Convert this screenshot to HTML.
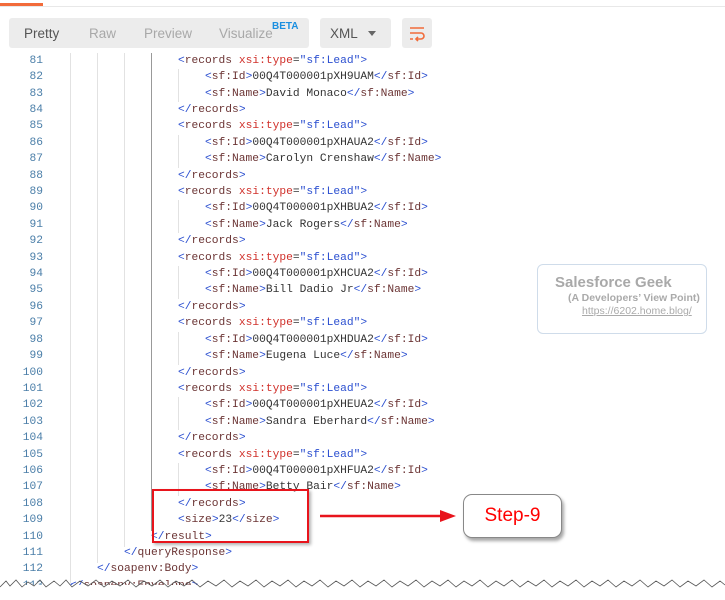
<!DOCTYPE html>
<html><head><meta charset="utf-8"><style>
body{margin:0;width:725px;height:600px;overflow:hidden;background:#fff;font-family:"Liberation Sans",sans-serif;position:relative}
.a{position:absolute}
pre{margin:0;font-family:"Liberation Mono",monospace;font-size:11.25px;line-height:16.4px;color:#333}
.n{position:absolute;left:0;width:43px;text-align:right;font-family:"Liberation Mono",monospace;font-size:11.25px;line-height:16.4px;color:#4a7ea8}
.b{color:#2b4fd0}.t{color:#6b3434}.r{color:#d0302a}.s{color:#2b4fd0}
.g{position:absolute;width:1px;background:#e2e2e2}
</style></head><body>
<div class="a" style="left:0;top:6px;width:725px;height:1px;background:#e8e8e8"></div>
<div class="a" style="left:0;top:3px;width:43px;height:3px;background:#f26b3a"></div>
<div class="a" style="left:9px;top:18px;width:300px;height:30px;background:#ececec;border-radius:3px"></div>
<div class="a" style="left:24px;top:26px;font-size:13.5px;color:#555">Pretty</div>
<div class="a" style="left:89px;top:26px;font-size:13.5px;color:#a8a8a8">Raw</div>
<div class="a" style="left:144px;top:26px;font-size:13.5px;color:#a8a8a8">Preview</div>
<div class="a" style="left:219px;top:26px;font-size:13.5px;color:#a8a8a8">Visualize</div>
<div class="a" style="left:272px;top:21px;font-size:10px;font-weight:bold;color:#1a8fe0">BETA</div>
<div class="a" style="left:320px;top:18px;width:71px;height:30px;background:#ececec;border-radius:3px"></div>
<div class="a" style="left:330px;top:26px;font-size:13.5px;color:#555">XML</div>
<div class="a" style="left:368px;top:31px;width:0;height:0;border-left:4px solid transparent;border-right:4px solid transparent;border-top:5px solid #666"></div>
<div class="a" style="left:402px;top:18px;width:30px;height:30px;background:#ececec;border-radius:3px"></div>
<svg class="a" style="left:402px;top:18px" width="30" height="30"><g stroke="#f26b3a" stroke-width="1.6" fill="none"><path d="M8 10h14M8 15h11a3 3 0 0 1 0 6h-5M8 21h3"/><path d="M16 19l-2 2 2 2"/></g></svg>

<div class="a" style="left:0;top:52px;width:725px;height:535px;overflow:hidden">
<div style="position:absolute;left:0;top:0.8px;width:725px">
<div class="g" style="left:70px;top:0;height:530px"></div>
<div class="g" style="left:97px;top:0;height:510px"></div>
<div class="g" style="left:124px;top:0;height:494px"></div>
<div class="g" style="left:151px;top:0;height:478px;background:#999"></div>
<div class="g" style="left:178px;top:16px;height:33px"></div>
<div class="g" style="left:178px;top:82px;height:33px"></div>
<div class="g" style="left:178px;top:147px;height:33px"></div>
<div class="g" style="left:178px;top:213px;height:33px"></div>
<div class="g" style="left:178px;top:279px;height:33px"></div>
<div class="g" style="left:178px;top:344px;height:33px"></div>
<div class="g" style="left:178px;top:410px;height:33px"></div>
<pre class="n">81
82
83
84
85
86
87
88
89
90
91
92
93
94
95
96
97
98
99
100
101
102
103
104
105
106
107
108
109
110
111
112
113</pre>
<pre class="a" style="left:70px;top:0">                <span class="b">&lt;</span><span class="t">records</span> <span class="r">xsi:type</span>=<span class="s">"sf:Lead"</span><span class="b">&gt;</span>
                    <span class="b">&lt;</span><span class="t">sf:Id</span><span class="b">&gt;</span>00Q4T000001pXH9UAM<span class="b">&lt;/</span><span class="t">sf:Id</span><span class="b">&gt;</span>
                    <span class="b">&lt;</span><span class="t">sf:Name</span><span class="b">&gt;</span>David Monaco<span class="b">&lt;/</span><span class="t">sf:Name</span><span class="b">&gt;</span>
                <span class="b">&lt;/</span><span class="t">records</span><span class="b">&gt;</span>
                <span class="b">&lt;</span><span class="t">records</span> <span class="r">xsi:type</span>=<span class="s">"sf:Lead"</span><span class="b">&gt;</span>
                    <span class="b">&lt;</span><span class="t">sf:Id</span><span class="b">&gt;</span>00Q4T000001pXHAUA2<span class="b">&lt;/</span><span class="t">sf:Id</span><span class="b">&gt;</span>
                    <span class="b">&lt;</span><span class="t">sf:Name</span><span class="b">&gt;</span>Carolyn Crenshaw<span class="b">&lt;/</span><span class="t">sf:Name</span><span class="b">&gt;</span>
                <span class="b">&lt;/</span><span class="t">records</span><span class="b">&gt;</span>
                <span class="b">&lt;</span><span class="t">records</span> <span class="r">xsi:type</span>=<span class="s">"sf:Lead"</span><span class="b">&gt;</span>
                    <span class="b">&lt;</span><span class="t">sf:Id</span><span class="b">&gt;</span>00Q4T000001pXHBUA2<span class="b">&lt;/</span><span class="t">sf:Id</span><span class="b">&gt;</span>
                    <span class="b">&lt;</span><span class="t">sf:Name</span><span class="b">&gt;</span>Jack Rogers<span class="b">&lt;/</span><span class="t">sf:Name</span><span class="b">&gt;</span>
                <span class="b">&lt;/</span><span class="t">records</span><span class="b">&gt;</span>
                <span class="b">&lt;</span><span class="t">records</span> <span class="r">xsi:type</span>=<span class="s">"sf:Lead"</span><span class="b">&gt;</span>
                    <span class="b">&lt;</span><span class="t">sf:Id</span><span class="b">&gt;</span>00Q4T000001pXHCUA2<span class="b">&lt;/</span><span class="t">sf:Id</span><span class="b">&gt;</span>
                    <span class="b">&lt;</span><span class="t">sf:Name</span><span class="b">&gt;</span>Bill Dadio Jr<span class="b">&lt;/</span><span class="t">sf:Name</span><span class="b">&gt;</span>
                <span class="b">&lt;/</span><span class="t">records</span><span class="b">&gt;</span>
                <span class="b">&lt;</span><span class="t">records</span> <span class="r">xsi:type</span>=<span class="s">"sf:Lead"</span><span class="b">&gt;</span>
                    <span class="b">&lt;</span><span class="t">sf:Id</span><span class="b">&gt;</span>00Q4T000001pXHDUA2<span class="b">&lt;/</span><span class="t">sf:Id</span><span class="b">&gt;</span>
                    <span class="b">&lt;</span><span class="t">sf:Name</span><span class="b">&gt;</span>Eugena Luce<span class="b">&lt;/</span><span class="t">sf:Name</span><span class="b">&gt;</span>
                <span class="b">&lt;/</span><span class="t">records</span><span class="b">&gt;</span>
                <span class="b">&lt;</span><span class="t">records</span> <span class="r">xsi:type</span>=<span class="s">"sf:Lead"</span><span class="b">&gt;</span>
                    <span class="b">&lt;</span><span class="t">sf:Id</span><span class="b">&gt;</span>00Q4T000001pXHEUA2<span class="b">&lt;/</span><span class="t">sf:Id</span><span class="b">&gt;</span>
                    <span class="b">&lt;</span><span class="t">sf:Name</span><span class="b">&gt;</span>Sandra Eberhard<span class="b">&lt;/</span><span class="t">sf:Name</span><span class="b">&gt;</span>
                <span class="b">&lt;/</span><span class="t">records</span><span class="b">&gt;</span>
                <span class="b">&lt;</span><span class="t">records</span> <span class="r">xsi:type</span>=<span class="s">"sf:Lead"</span><span class="b">&gt;</span>
                    <span class="b">&lt;</span><span class="t">sf:Id</span><span class="b">&gt;</span>00Q4T000001pXHFUA2<span class="b">&lt;/</span><span class="t">sf:Id</span><span class="b">&gt;</span>
                    <span class="b">&lt;</span><span class="t">sf:Name</span><span class="b">&gt;</span>Betty Bair<span class="b">&lt;/</span><span class="t">sf:Name</span><span class="b">&gt;</span>
                <span class="b">&lt;/</span><span class="t">records</span><span class="b">&gt;</span>
                <span class="b">&lt;</span><span class="t">size</span><span class="b">&gt;</span>23<span class="b">&lt;/</span><span class="t">size</span><span class="b">&gt;</span>
            <span class="b">&lt;/</span><span class="t">result</span><span class="b">&gt;</span>
        <span class="b">&lt;/</span><span class="t">queryResponse</span><span class="b">&gt;</span>
    <span class="b">&lt;/</span><span class="t">soapenv:Body</span><span class="b">&gt;</span>
<span class="b">&lt;/</span><span class="t">soapenv:Envelope</span><span class="b">&gt;</span></pre>
</div>
</div>

<div class="a" style="left:537px;top:264px;width:168px;height:68px;border:1px solid #cfdcea;border-radius:6px"></div>
<div class="a" style="left:555px;top:274px;font-size:15px;font-weight:bold;color:#a9a9a9">Salesforce Geek</div>
<div class="a" style="left:568px;top:292px;font-size:10.5px;font-weight:bold;color:#aaa">(A Developers’ View Point)</div>
<div class="a" style="left:582px;top:305px;font-size:10.5px;color:#aaa;text-decoration:underline">https://6202.home.blog/</div>

<div class="a" style="left:152px;top:489px;width:153px;height:50px;border:2px solid #e8141c;box-shadow:2px 2px 3px rgba(0,0,0,.3)"></div>
<svg class="a" style="left:318px;top:508px" width="140" height="16"><path d="M2 8H128" stroke="#e8141c" stroke-width="2.5"/><path d="M122 2L138 8L122 14Z" fill="#e8141c"/></svg>
<div class="a" style="left:463px;top:494px;width:97px;height:42px;border:1px solid #888;border-radius:9px;background:#fff;box-shadow:2px 3px 3px rgba(0,0,0,.35)"></div>
<div class="a" style="left:463px;top:505px;width:99px;text-align:center;font-size:19px;color:#f00">Step-9</div>

<svg class="a" style="left:0;top:578px" width="725" height="22"><rect x="0" y="7" width="725" height="15" fill="#fff"/><polyline fill="none" stroke="#555" stroke-width="0.8" points="0,9 6,3 10,8 16,2 22,9 28,4 34,8 40,2 46,9 54,3 60,8 66,2 72,9 80,3 88,8 96,2 104,9 112,3 120,8 128,2 136,9 144,3 152,8 160,2 168,9 176,3 184,8 192,2 200,9 208,3 216,8 224,2 232,9 240,3 248,8 256,2 264,9 272,3 280,8 288,2 296,9 304,3 312,8 320,2 328,9 336,3 344,8 352,2 360,9 368,3 376,8 384,2 392,9 400,3 408,8 416,2 424,9 432,3 440,8 448,2 456,9 464,3 472,8 480,2 488,9 496,3 504,8 512,2 520,9 528,3 536,8 544,2 552,9 560,3 568,8 576,2 584,9 592,3 600,8 608,2 616,9 624,3 632,8 640,2 648,9 656,3 664,8 672,2 680,9 688,3 696,8 704,2 712,9 720,3 725,7"/></svg>
</body></html>
